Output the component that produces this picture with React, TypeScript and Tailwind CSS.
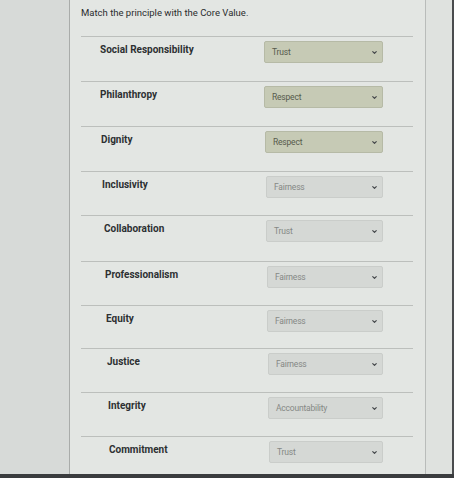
import { ChevronDown } from "lucide-react";

type Row = {
  label: string;
  value: string;
  h: string;
  pad: string;
  box: string;
  tone: "green" | "gray";
};

const rows: Row[] = [
  { label: "Social Responsibility", value: "Trust", h: "h-[45px]", pad: "pl-[19px]", box: "left-[183px]", tone: "green" },
  { label: "Philanthropy", value: "Respect", h: "h-[45px]", pad: "pl-[19px]", box: "left-[183px]", tone: "green" },
  { label: "Dignity", value: "Respect", h: "h-[45px]", pad: "pl-[20px]", box: "left-[184px]", tone: "green" },
  { label: "Inclusivity", value: "Fairness", h: "h-[44px]", pad: "pl-[21px]", box: "left-[185px]", tone: "gray" },
  { label: "Collaboration", value: "Trust", h: "h-[46px]", pad: "pl-[23px]", box: "left-[185px]", tone: "gray" },
  { label: "Professionalism", value: "Fairness", h: "h-[44px]", pad: "pl-[24px]", box: "left-[186px]", tone: "gray" },
  { label: "Equity", value: "Fairness", h: "h-[43px]", pad: "pl-[25px]", box: "left-[186px]", tone: "gray" },
  { label: "Justice", value: "Fairness", h: "h-[44px]", pad: "pl-[26px]", box: "left-[187px]", tone: "gray" },
  { label: "Integrity", value: "Accountability", h: "h-[44px]", pad: "pl-[27px]", box: "left-[187px]", tone: "gray" },
  { label: "Commitment", value: "Trust", h: "h-[44px]", pad: "pl-[28px]", box: "left-[188px]", tone: "gray" },
];

function Select({ value, tone, className }: { value: string; tone: Row["tone"]; className: string }) {
  return (
    <div
      className={
        "absolute right-[30px] top-[4px] h-[22px] flex items-center justify-between pl-[7px] pr-[4px] rounded-[2px] border " +
        (tone === "green"
          ? "bg-[#c6cab5] border-[#b6baa6] text-[#565a4c] "
          : "bg-[#d5d8d5] border-[#cacdca] text-[#858885] ") +
        className
      }
    >
      <span className="text-[8.5px] tracking-[-0.2px]">{value}</span>
      <ChevronDown className="w-[7px] h-[7px] text-[#44474a]" strokeWidth={4} />
    </div>
  );
}

export default function App() {
  return (
    <div className="w-[454px] h-[478px] flex flex-col bg-[#d8dbd8] font-['Roboto','Liberation_Sans',sans-serif] overflow-hidden">
      <div className="flex flex-1 min-h-0">
        <div className="w-[70px] shrink-0 bg-[#d7dad8] border-r border-[#a9acaa]" />
        <div className="w-[356px] shrink-0 bg-[#e3e6e3] border-r border-[#b9bcba] pl-[11px] pr-[12px]">
          <div className="h-[36px] pt-[6px] text-[9.5px] text-[#2a2c2e]">
            Match the principle with the Core Value.
          </div>
          {rows.map((r) => (
            <div key={r.label} className={"relative border-t border-[#bcbfbc] " + r.h}>
              <div className={"pt-[5px] text-[10px] font-bold text-[#2d3032] " + r.pad}>{r.label}</div>
              <Select value={r.value} tone={r.tone} className={r.box} />
            </div>
          ))}
        </div>
        <div className="flex-1 bg-[#dfe2df] border-r-[2px] border-[#4a4c4e]" />
      </div>
      <div className="h-[4px] bg-[#3a3c3e]" />
    </div>
  );
}
